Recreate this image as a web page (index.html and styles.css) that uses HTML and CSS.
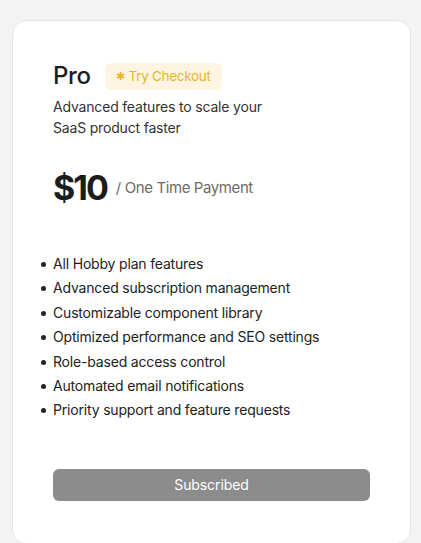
FILE: index.html
```html
<!DOCTYPE html>
<html>
<head>
<meta charset="utf-8">
<link rel="stylesheet" href="styles.css">
</head>
<body>
<div class="card">
  <div class="head">
    <h2 class="title">Pro</h2>
    <span class="badge"><span class="star">✱</span>Try Checkout</span>
  </div>
  <p class="desc">Advanced features to scale your<br>SaaS product faster</p>
  <div class="price"><span class="amount">$10</span><span class="per">/ One Time Payment</span></div>
  <ul class="features">
    <li>All Hobby plan features</li>
    <li>Advanced subscription management</li>
    <li>Customizable component library</li>
    <li>Optimized performance and SEO settings</li>
    <li>Role-based access control</li>
    <li>Automated email notifications</li>
    <li>Priority support and feature requests</li>
  </ul>
  <button class="btn">Subscribed</button>
</div>
</body>
</html>
```
FILE: styles.css
```css
html, body { margin: 0; padding: 0; }
body {
  background: #f3f3f3;
  font-family: Inter, "Noto Sans", sans-serif;
  color: #222;
  padding: 20px 10px 0 12px;
  height: 543px;
  box-sizing: border-box;
  overflow: hidden;
}
.card {
  background: #fff;
  border: 1px solid #e4e4e4;
  border-radius: 14px;
  height: 524px;
  box-sizing: border-box;
  padding: 41px 40px 0 40px;
}
.head { display: flex; align-items: center; gap: 14px; height: 28px; }
.title { margin: 0; font-size: 24px; font-weight: 500; color: #1c1c1c; line-height: 28px; letter-spacing: -0.3px; }
.badge {
  background: #fdf5e1;
  color: #eab52c;
  font-size: 13.5px;
  letter-spacing: -0.3px;
  height: 27px;
  padding: 0 11px;
  border-radius: 6px;
  display: inline-flex;
  align-items: center;
  gap: 4px;
}
.star { font-size: 11px; }
.desc { margin: 6px 0 0; font-size: 14px; line-height: 21px; color: #333; letter-spacing: -0.18px; }
.price { margin-top: 27px; display: flex; gap: 9px; height: 44px; align-items: center; }
.amount { font-size: 34px; font-weight: 700; color: #1c1c1c; letter-spacing: -2px; }
.per { font-size: 15px; color: #6b6b6b; letter-spacing: -0.4px; }
.features { margin: 43px 0 0; padding: 0; list-style: none; }
.features li { font-size: 14px; line-height: 24.4px; color: #222; position: relative; letter-spacing: -0.18px; }
.features li::before {
  content: "";
  position: absolute;
  left: -12px;
  top: 10px;
  width: 5px; height: 5px;
  border-radius: 50%;
  background: #222;
}
.btn {
  margin-top: 46px;
  width: 100%;
  height: 32px;
  border: 0;
  border-radius: 6px;
  background: #8c8c8c;
  color: #fff;
  font-family: Inter, "Noto Sans", sans-serif;
  font-size: 14px;
  letter-spacing: -0.1px;
  display: block;
}
```
